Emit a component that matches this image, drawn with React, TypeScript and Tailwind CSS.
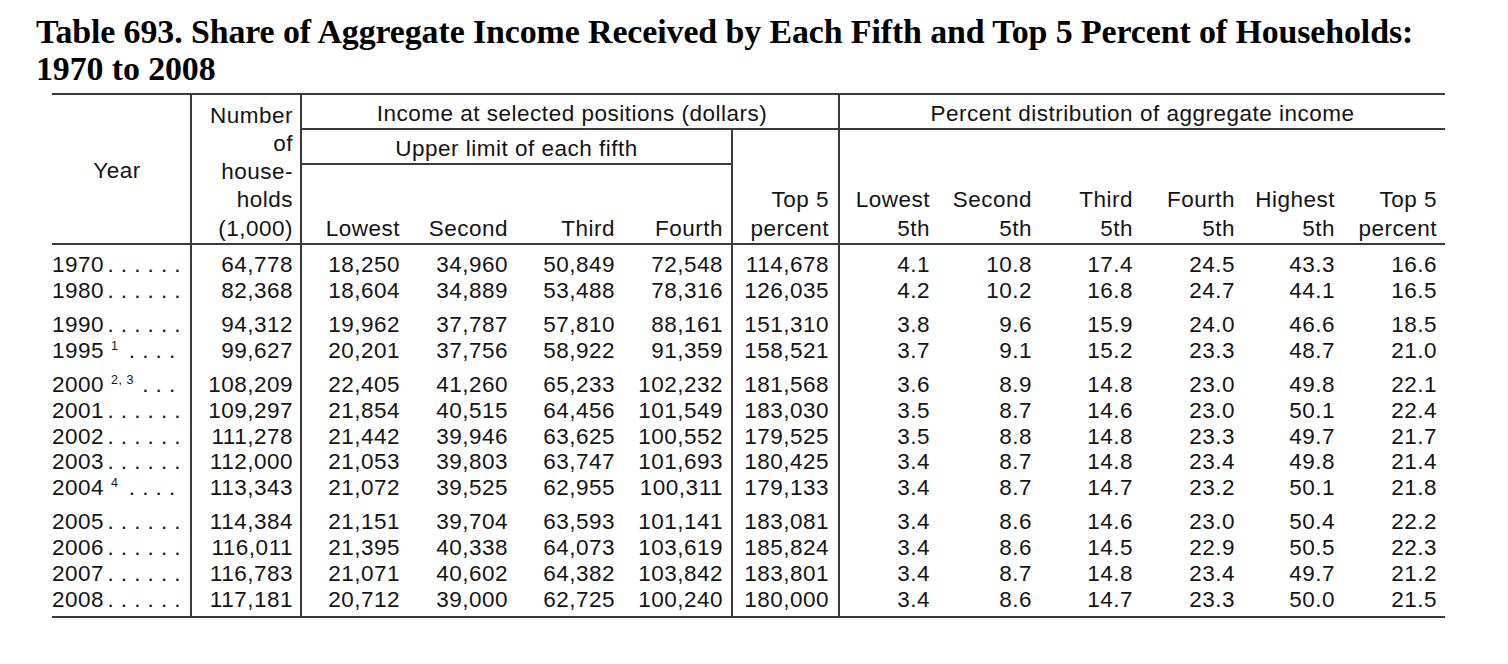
import React from "react";

type Row = {
  year: string;
  note?: string;
  dots: number;
  cells: string[];
};

const groups: Row[][] = [
  [
    { year: "1970", dots: 6, cells: ["64,778", "18,250", "34,960", "50,849", "72,548", "114,678", "4.1", "10.8", "17.4", "24.5", "43.3", "16.6"] },
    { year: "1980", dots: 6, cells: ["82,368", "18,604", "34,889", "53,488", "78,316", "126,035", "4.2", "10.2", "16.8", "24.7", "44.1", "16.5"] },
  ],
  [
    { year: "1990", dots: 6, cells: ["94,312", "19,962", "37,787", "57,810", "88,161", "151,310", "3.8", "9.6", "15.9", "24.0", "46.6", "18.5"] },
    { year: "1995", note: "1", dots: 4, cells: ["99,627", "20,201", "37,756", "58,922", "91,359", "158,521", "3.7", "9.1", "15.2", "23.3", "48.7", "21.0"] },
  ],
  [
    { year: "2000", note: "2, 3", dots: 3, cells: ["108,209", "22,405", "41,260", "65,233", "102,232", "181,568", "3.6", "8.9", "14.8", "23.0", "49.8", "22.1"] },
    { year: "2001", dots: 6, cells: ["109,297", "21,854", "40,515", "64,456", "101,549", "183,030", "3.5", "8.7", "14.6", "23.0", "50.1", "22.4"] },
    { year: "2002", dots: 6, cells: ["111,278", "21,442", "39,946", "63,625", "100,552", "179,525", "3.5", "8.8", "14.8", "23.3", "49.7", "21.7"] },
    { year: "2003", dots: 6, cells: ["112,000", "21,053", "39,803", "63,747", "101,693", "180,425", "3.4", "8.7", "14.8", "23.4", "49.8", "21.4"] },
    { year: "2004", note: "4", dots: 4, cells: ["113,343", "21,072", "39,525", "62,955", "100,311", "179,133", "3.4", "8.7", "14.7", "23.2", "50.1", "21.8"] },
  ],
  [
    { year: "2005", dots: 6, cells: ["114,384", "21,151", "39,704", "63,593", "101,141", "183,081", "3.4", "8.6", "14.6", "23.0", "50.4", "22.2"] },
    { year: "2006", dots: 6, cells: ["116,011", "21,395", "40,338", "64,073", "103,619", "185,824", "3.4", "8.6", "14.5", "22.9", "50.5", "22.3"] },
    { year: "2007", dots: 6, cells: ["116,783", "21,071", "40,602", "64,382", "103,842", "183,801", "3.4", "8.7", "14.8", "23.4", "49.7", "21.2"] },
    { year: "2008", dots: 6, cells: ["117,181", "20,712", "39,000", "62,725", "100,240", "180,000", "3.4", "8.6", "14.7", "23.3", "50.0", "21.5"] },
  ],
];

const widths = [138, 110, 108, 108, 107, 108, 107, 100, 102, 101, 102, 100, 102];

// cells that carry a rule on their left side: households, lowest, top 5, percent block
const ruled = [0, 1, 5, 6];

function YearCell({ row }: { row: Row }) {
  return (
    <div className="flex items-baseline">
      <span>{row.year}</span>
      {row.note && (
        <span className="relative -top-[8px] ml-[7px] text-[12.5px] leading-none">
          {row.note}
        </span>
      )}
      <span className="ml-auto flex pr-[11px]">
        {Array.from({ length: row.dots }).map((_, i) => (
          <span key={i} className="w-[13.4px] text-center">
            .
          </span>
        ))}
      </span>
    </div>
  );
}

export default function App() {
  return (
    <div className="min-h-screen bg-white pl-[36px] pt-[13px] text-[#141414]">
      {/* Title */}
      <h1 className="font-['Liberation_Serif',serif] text-[33.9px] leading-[37px] font-bold tracking-[-0.1px] text-black">
        Table 693. Share of Aggregate Income Received by Each Fifth and Top 5 Percent of Households:
        <br />
        1970 to 2008
      </h1>

      <table className="mt-[6px] ml-[16px] w-[1393px] table-fixed border-separate border-spacing-0 border-y-2 border-[#3a3a3a] font-['Liberation_Sans',Arial,sans-serif] text-[22.5px] leading-[28px] tracking-[0.5px]">
        <colgroup>
          {widths.map((w, i) => (
            <col key={i} style={{ width: w }} />
          ))}
        </colgroup>
        <thead>
          <tr className="h-[35px]">
            <th
              rowSpan={3}
              className="border-b-2 border-[#3a3a3a] pr-[8px] pt-[4px] align-middle font-normal"
            >
              Year
            </th>
            <th
              rowSpan={3}
              className="border-b-2 border-l-2 border-[#3a3a3a] pr-[7px] text-right align-bottom leading-[28.3px] font-normal"
            >
              Number
              <br />
              of
              <br />
              house-
              <br />
              holds
              <br />
              (1,000)
            </th>
            <th
              colSpan={5}
              className="border-b-2 border-l-2 border-[#3a3a3a] p-0 pt-[5px] pl-[4px] text-center align-top font-normal"
            >
              Income at selected positions (dollars)
            </th>
            <th
              colSpan={6}
              className="border-b-2 border-l-2 border-[#3a3a3a] p-0 pt-[5px] text-center align-top font-normal"
            >
              Percent distribution of aggregate income
            </th>
          </tr>
          <tr className="h-[35px]">
            <th
              colSpan={4}
              className="border-b-2 border-l-2 border-[#3a3a3a] p-0 pt-[5px] text-center align-top font-normal"
            >
              Upper limit of each fifth
            </th>
            <th
              rowSpan={2}
              className="border-b-2 border-l-2 border-[#3a3a3a] pr-[9px] text-right align-bottom leading-[28.3px] font-normal"
            >
              Top 5
              <br />
              percent
            </th>
            {[
              ["Lowest", "5th"],
              ["Second", "5th"],
              ["Third", "5th"],
              ["Fourth", "5th"],
              ["Highest", "5th"],
              ["Top 5", "percent"],
            ].map(([a, b], i) => (
              <th
                key={a}
                rowSpan={2}
                className={`border-b-2 border-[#3a3a3a] pr-[8px] text-right align-bottom leading-[28.3px] font-normal whitespace-nowrap ${
                  i === 0 ? "border-l-2" : ""
                }`}
              >
                {a}
                <br />
                {b}
              </th>
            ))}
          </tr>
          <tr className="h-[80px]">
            {["Lowest", "Second", "Third", "Fourth"].map((t, i) => (
              <th
                key={t}
                className={`border-b-2 border-[#3a3a3a] pr-[8px] text-right align-bottom leading-[28.3px] font-normal ${
                  i === 0 ? "border-l-2" : ""
                }`}
              >
                {t}
              </th>
            ))}
          </tr>
        </thead>

        {groups.map((group, gi) => (
          <tbody key={gi}>
            {group.map((row, ri) => {
              const first = ri === 0;
              const last = gi === groups.length - 1 && ri === group.length - 1;
              const pad = first ? (gi === 0 ? "pt-[7px]" : "pt-[8.7px]") : "";
              const padB = last ? "pb-[4px]" : "";
              return (
                <tr key={row.year} className="leading-[25.7px]">
                  <td className={`p-0 ${pad} ${padB}`}>
                    <YearCell row={row} />
                  </td>
                  {row.cells.map((c, ci) => (
                    <td
                      key={ci}
                      className={`text-right whitespace-nowrap ${pad} ${padB} ${
                        ci === 0 ? "pr-[7px]" : ci === 5 ? "pr-[9px]" : "pr-[8px]"
                      } ${ruled.includes(ci) ? "border-l-2 border-[#3a3a3a]" : ""}`}
                    >
                      {c}
                    </td>
                  ))}
                </tr>
              );
            })}
          </tbody>
        ))}
      </table>
    </div>
  );
}
